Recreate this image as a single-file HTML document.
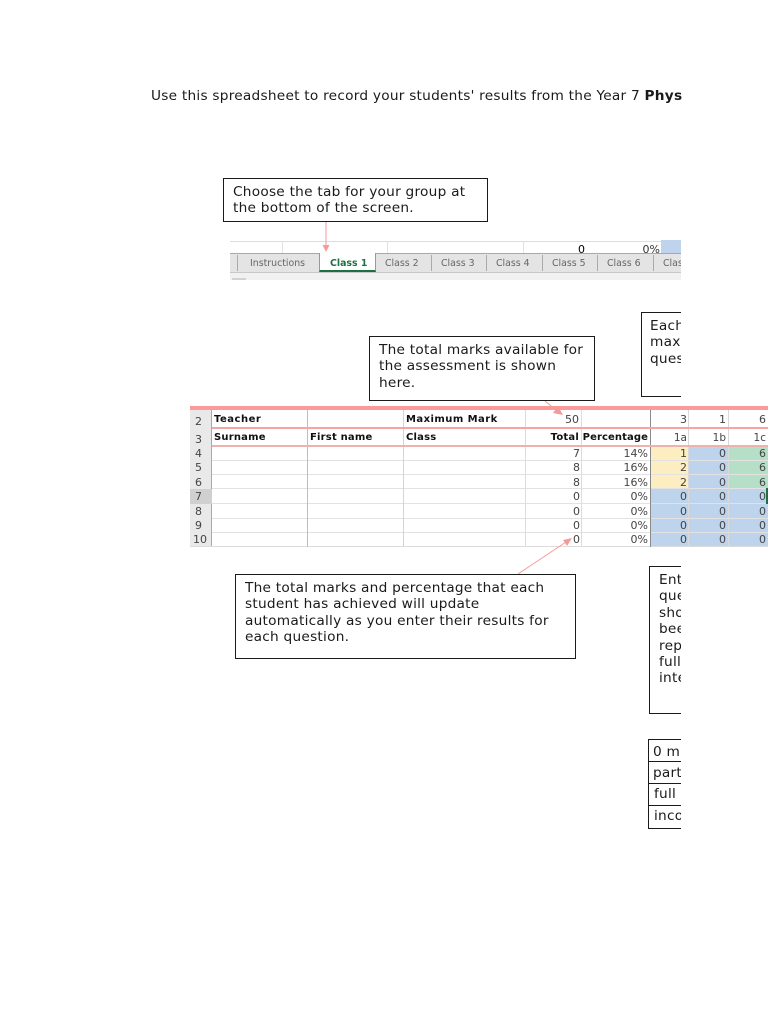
<!DOCTYPE html>
<html><head><meta charset="utf-8">
<style>
html,body{margin:0;padding:0;background:#fff;width:768px;height:1024px;overflow:hidden}
#p{position:relative;width:768px;height:1024px;overflow:hidden;font-family:"DejaVu Sans",sans-serif;color:#111;filter:blur(.25px)}
#s{position:absolute;left:0;top:0;width:768px;height:1024px;filter:blur(.3px)}
.a{position:absolute;box-sizing:border-box}
.t{position:absolute;white-space:nowrap;font-size:13.7px;letter-spacing:.24px;line-height:16.4px;color:#1a1a1a}
.b{position:absolute;box-sizing:border-box;border:1px solid #1a1a1a;background:#fff}
.r{position:absolute;background:#e2e2e2}
.c{position:absolute;white-space:nowrap;font-family:"DejaVu Sans",sans-serif;font-size:11px;line-height:14px;color:#444}
.c.h{font-weight:bold;color:#111;letter-spacing:.2px;font-size:10px}
.n{position:absolute;text-align:right;white-space:nowrap;font-size:11px;line-height:14px;color:#444}
.n.h{font-weight:bold;color:#111;letter-spacing:.2px;font-size:10px}
.tab{position:absolute;top:257px;font-size:9.4px;line-height:14px;color:#666;white-space:nowrap}
.sep{position:absolute;top:255px;width:1px;height:16px;background:#aaa}
.clip{position:absolute;overflow:hidden;left:0;top:0;width:681px;height:1024px}
</style></head><body><div id="p">

<div class="t" style="left:151px;top:87px;width:532px;height:18px;overflow:hidden;line-height:18px">Use this spreadsheet to record your students' results from the Year 7 <b>Physics</b></div>

<div id="s">
<!-- Tab strip -->
<div class="a" style="left:230px;top:241px;width:451px;height:1px;background:#ddd"></div>
<div class="a" style="left:282px;top:241px;width:1px;height:12px;background:#e2e2e2"></div>
<div class="a" style="left:387px;top:241px;width:1px;height:12px;background:#e2e2e2"></div>
<div class="a" style="left:523px;top:241px;width:1px;height:12px;background:#e2e2e2"></div>
<div class="a" style="left:661px;top:240px;width:20px;height:13px;background:#bdd4ec"></div>
<div class="n" style="left:540px;top:242px;width:45px;color:#000;font-size:11px;line-height:16px">0</div>
<div class="n" style="left:620px;top:242px;width:40px;color:#333;font-size:11px;line-height:16px">0%</div>
<div class="a" style="left:230px;top:253px;width:451px;height:20px;background:#e4e4e4;border-top:1px solid #a8a8a8;border-bottom:1px solid #c8c8c8"></div>
<div class="a" style="left:230px;top:273px;width:451px;height:7px;background:#f1f1f1"></div>
<div class="a" style="left:232px;top:278px;width:14px;height:2px;background:#999;opacity:.35"></div>
<div class="a" style="left:319px;top:253px;width:57px;height:19px;background:#fff;border-left:1px solid #999;border-right:1px solid #999;border-bottom:2px solid #1d7044"></div>
<div class="sep" style="left:237px"></div>
<div class="sep" style="left:431px"></div>
<div class="sep" style="left:486px"></div>
<div class="sep" style="left:542px"></div>
<div class="sep" style="left:597px"></div>
<div class="sep" style="left:653px"></div>
<div class="tab" style="left:250px">Instructions</div>
<div class="tab" style="left:330px;color:#1d7044;font-weight:bold">Class 1</div>
<div class="tab" style="left:385px">Class 2</div>
<div class="tab" style="left:441px">Class 3</div>
<div class="tab" style="left:496px">Class 4</div>
<div class="tab" style="left:552px">Class 5</div>
<div class="tab" style="left:607px">Class 6</div>
<div class="a" style="left:663px;top:257px;width:18px;overflow:hidden;font-size:9.4px;line-height:14px;color:#666;white-space:nowrap">Class 7</div>

<!-- Sheet -->
<div class="a" style="left:190px;top:406px;width:22px;height:141px;background:#e9e9e9;border-right:1px solid #aaa"></div>
<div class="a" style="left:190px;top:489px;width:22px;height:15px;background:#d0d0d0"></div>

<div class="a" style="left:650px;top:446px;width:118px;height:101px;background:#bdd4ec"></div>
<div class="a" style="left:650px;top:446px;width:39px;height:43px;background:#fdeec2"></div>
<div class="a" style="left:728px;top:446px;width:40px;height:43px;background:#b5dfc6"></div>

<div class="r" style="left:212px;top:460px;width:556px;height:1px"></div>
<div class="r" style="left:212px;top:474px;width:556px;height:1px"></div>
<div class="r" style="left:212px;top:488px;width:556px;height:1px"></div>
<div class="r" style="left:212px;top:503px;width:556px;height:1px"></div>
<div class="r" style="left:212px;top:518px;width:556px;height:1px"></div>
<div class="r" style="left:212px;top:532px;width:556px;height:1px"></div>
<div class="r" style="left:190px;top:546px;width:578px;height:1px;background:#dcdcdc"></div>

<div class="r" style="left:307px;top:410px;width:1px;height:137px;background:#bdbdbd"></div>
<div class="r" style="left:403px;top:410px;width:1px;height:137px;background:#d4d4d4"></div>
<div class="r" style="left:525px;top:410px;width:1px;height:137px;background:#dcdcdc"></div>
<div class="r" style="left:581px;top:410px;width:1px;height:137px;background:#dcdcdc"></div>
<div class="r" style="left:650px;top:406px;width:1px;height:141px;background:#8a8a8a"></div>
<div class="r" style="left:688px;top:410px;width:1px;height:137px;background:#d8d8d8"></div>
<div class="r" style="left:728px;top:410px;width:1px;height:137px;background:#d8d8d8"></div>

<div class="a" style="left:190px;top:406px;width:578px;height:4px;background:#fb9a9a"></div>
<div class="a" style="left:212px;top:427px;width:556px;height:1.5px;background:#f6a5a5"></div>
<div class="a" style="left:212px;top:445px;width:556px;height:1.5px;background:#efb0b0"></div>

<div class="c" style="left:195px;top:415px">2</div>
<div class="c" style="left:195px;top:433px">3</div>
<div class="c" style="left:195px;top:447px">4</div>
<div class="c" style="left:195px;top:461px">5</div>
<div class="c" style="left:195px;top:476px">6</div>
<div class="c" style="left:195px;top:490px">7</div>
<div class="c" style="left:195px;top:505px">8</div>
<div class="c" style="left:195px;top:519px">9</div>
<div class="c" style="left:193px;top:533px">10</div>

<div class="c h" style="left:214px;top:413px;letter-spacing:.5px">Teacher</div>
<div class="c h" style="left:214px;top:431px">Surname</div>
<div class="c h" style="left:310px;top:431px">First name</div>
<div class="c h" style="left:406px;top:413px;letter-spacing:.45px">Maximum Mark</div>
<div class="c h" style="left:406px;top:431px">Class</div>
<div class="n" style="left:530px;top:413px;width:49px">50</div>
<div class="n h" style="left:530px;top:431px;width:49px">Total</div>
<div class="n h" style="left:578px;top:431px;width:70px;letter-spacing:.1px">Percentage</div>

<div class="n" style="left:650px;top:413px;width:37px">3</div>
<div class="n" style="left:690px;top:413px;width:36px">1</div>
<div class="n" style="left:730px;top:413px;width:36px">6</div>
<div class="n" style="left:650px;top:431px;width:37px;font-size:10.5px">1a</div>
<div class="n" style="left:690px;top:431px;width:36px;font-size:10.5px">1b</div>
<div class="n" style="left:730px;top:431px;width:36px;font-size:10.5px">1c</div>

<div class="n" style="left:530px;top:447px;width:50px">7</div><div class="n" style="left:590px;top:447px;width:58px">14%</div>
<div class="n" style="left:530px;top:461px;width:50px">8</div><div class="n" style="left:590px;top:461px;width:58px">16%</div>
<div class="n" style="left:530px;top:476px;width:50px">8</div><div class="n" style="left:590px;top:476px;width:58px">16%</div>
<div class="n" style="left:530px;top:490px;width:50px">0</div><div class="n" style="left:590px;top:490px;width:58px">0%</div>
<div class="n" style="left:530px;top:505px;width:50px">0</div><div class="n" style="left:590px;top:505px;width:58px">0%</div>
<div class="n" style="left:530px;top:519px;width:50px">0</div><div class="n" style="left:590px;top:519px;width:58px">0%</div>
<div class="n" style="left:530px;top:533px;width:50px">0</div><div class="n" style="left:590px;top:533px;width:58px">0%</div>

<div class="n" style="left:650px;top:447px;width:37px">1</div><div class="n" style="left:690px;top:447px;width:36px">0</div><div class="n" style="left:730px;top:447px;width:36px">6</div>
<div class="n" style="left:650px;top:461px;width:37px">2</div><div class="n" style="left:690px;top:461px;width:36px">0</div><div class="n" style="left:730px;top:461px;width:36px">6</div>
<div class="n" style="left:650px;top:476px;width:37px">2</div><div class="n" style="left:690px;top:476px;width:36px">0</div><div class="n" style="left:730px;top:476px;width:36px">6</div>
<div class="n" style="left:650px;top:490px;width:37px">0</div><div class="n" style="left:690px;top:490px;width:36px">0</div><div class="n" style="left:730px;top:490px;width:36px">0</div>
<div class="n" style="left:650px;top:505px;width:37px">0</div><div class="n" style="left:690px;top:505px;width:36px">0</div><div class="n" style="left:730px;top:505px;width:36px">0</div>
<div class="n" style="left:650px;top:519px;width:37px">0</div><div class="n" style="left:690px;top:519px;width:36px">0</div><div class="n" style="left:730px;top:519px;width:36px">0</div>
<div class="n" style="left:650px;top:533px;width:37px">0</div><div class="n" style="left:690px;top:533px;width:36px">0</div><div class="n" style="left:730px;top:533px;width:36px">0</div>
<div class="a" style="left:766px;top:488px;width:2px;height:16px;background:#1d7044"></div>
</div>

<!-- Arrows -->
<svg class="a" style="left:0;top:0" width="768" height="1024">
<g stroke="#f59a9a" stroke-width="1" fill="#f59a9a">
<line x1="326" y1="221" x2="326" y2="246"/><polygon points="322.5,245 329.5,245 326,252" stroke="none"/>
<line x1="545" y1="401" x2="556" y2="410"/><polygon points="563,415 553,413 558,406" stroke="none"/>
<line x1="518" y1="574" x2="566" y2="542"/><polygon points="572,538 563,540 567,546" stroke="none"/>
</g></svg>

<!-- Callouts -->
<div class="b" style="left:223px;top:178px;width:265px;height:44px"></div>
<div class="t" style="left:233px;top:184px">Choose the tab for your group at<br>the bottom of the screen.</div>

<div class="b" style="left:369px;top:336px;width:226px;height:65px"></div>
<div class="t" style="left:379px;top:342px">The total marks available for<br>the assessment is shown<br>here.</div>

<div class="b" style="left:235px;top:574px;width:341px;height:85px"></div>
<div class="t" style="left:245px;top:580px">The total marks and percentage that each<br>student has achieved will update<br>automatically as you enter their results for<br>each question.</div>

<div class="clip">
<div class="b" style="left:641px;top:312px;width:80px;height:85px"></div>
<div class="t" style="left:650px;top:318px">Each<br>maximum<br>question</div>

<div class="b" style="left:649px;top:566px;width:80px;height:148px"></div>
<div class="t" style="left:659px;top:572px">Enter<br>question<br>should<br>been<br>represent<br>full<br>integer</div>

<div class="b" style="left:648px;top:739px;width:80px;height:23px"></div>
<div class="b" style="left:648px;top:761px;width:80px;height:23px"></div>
<div class="b" style="left:648px;top:783px;width:80px;height:23px"></div>
<div class="b" style="left:648px;top:805px;width:80px;height:24px"></div>
<div class="t" style="left:653px;top:744px">0 marks</div>
<div class="t" style="left:653px;top:765px">partial</div>
<div class="t" style="left:654px;top:786px">full marks</div>
<div class="t" style="left:654px;top:808px">incorrect</div>
</div>

</div></body></html>
